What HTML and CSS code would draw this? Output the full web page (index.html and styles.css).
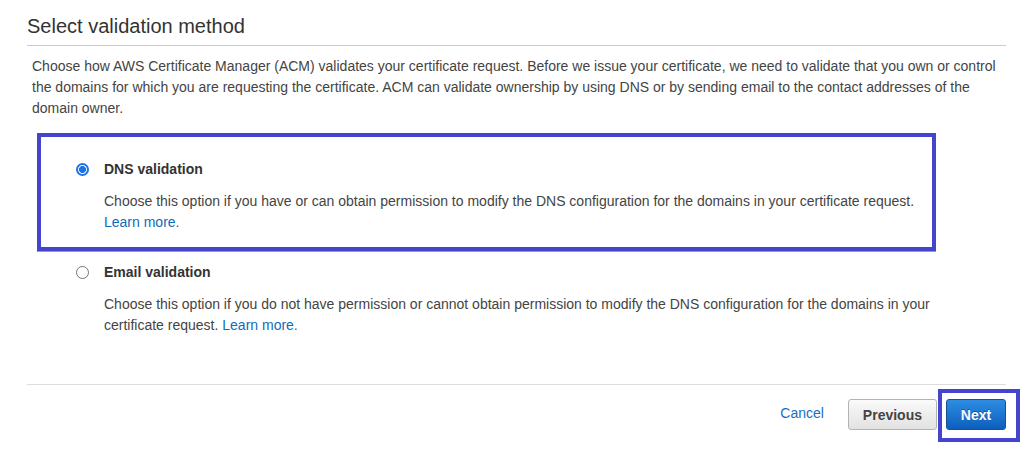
FILE: index.html
```html
<!DOCTYPE html>
<html lang="en">
<head>
<meta charset="utf-8">
<title>Select validation method</title>
<link rel="stylesheet" href="styles.css">
</head>
<body>
<div class="page">
  <h1 class="title">Select validation method</h1>
  <p class="intro">Choose how AWS Certificate Manager (ACM) validates your certificate request. Before we issue your certificate, we need to validate that you own or control the domains for which you are requesting the certificate. ACM can validate ownership by using DNS or by sending email to the contact addresses of the domain owner.</p>

  <div class="option option-selected">
    <span class="radio radio-checked"></span>
    <span class="option-label">DNS validation</span>
    <p class="option-desc">Choose this option if you have or can obtain permission to modify the DNS configuration for the domains in your certificate request. <a class="link" href="#">Learn more.</a></p>
  </div>

  <div class="option option-plain">
    <span class="radio"></span>
    <span class="option-label">Email validation</span>
    <p class="option-desc">Choose this option if you do not have permission or cannot obtain permission to modify the DNS configuration for the domains in your certificate request. <a class="link" href="#">Learn more.</a></p>
  </div>

  <div class="footer">
    <a class="link cancel" href="#">Cancel</a>
    <button class="btn btn-secondary">Previous</button>
    <span class="next-wrap"><button class="btn btn-primary">Next</button></span>
  </div>
</div>
</body>
</html>
```
FILE: styles.css
```css
html, body {
  margin: 0;
  padding: 0;
  background: #ffffff;
}

body {
  font-family: "Liberation Sans", Arial, sans-serif;
  font-size: 14px;
  color: #444444;
}

.page {
  width: 979px;
  padding-left: 27px;
}

.title {
  margin: 0;
  padding: 14px 0 7px 0;
  font-size: 20px;
  line-height: 24px;
  font-weight: normal;
  color: #333333;
  border-bottom: 1px solid #cccccc;
}

.intro {
  margin: 10px 0 0 0;
  padding-left: 5px;
  font-size: 14px;
  line-height: 21px;
  color: #444444;
}

.option {
  display: grid;
  grid-template-columns: 13px 836px;
  column-gap: 15px;
  margin-left: 10px;
  margin-right: 70px;
  border: 4px solid transparent;
  padding-left: 35px;
}

.option-selected {
  margin-top: 14px;
  padding-top: 22px;
  padding-bottom: 14px;
  border-color: #4444cc;
  box-shadow: 0 1px 0 #9a9a9a;
}

.option-plain {
  margin-top: 0;
  padding-top: 7px;
  padding-bottom: 14px;
}

.radio {
  grid-row: 1;
  grid-column: 1;
  align-self: center;
  width: 13px;
  height: 13px;
  box-sizing: border-box;
  border: 1px solid #767676;
  border-radius: 50%;
  background: #ffffff;
}

.radio-checked {
  border: 2px solid #1a73e8;
  background: radial-gradient(circle, #1a73e8 0 3.2px, #ffffff 3.8px);
}

.option-label {
  grid-row: 1;
  grid-column: 2;
  font-weight: bold;
  line-height: 21px;
  color: #333333;
}

.option-desc {
  grid-row: 2;
  grid-column: 2;
  margin: 11px 0 0 0;
  line-height: 21px;
  color: #444444;
}

.link {
  color: #0f6cbd;
  text-decoration: none;
}

.footer {
  display: flex;
  justify-content: flex-end;
  align-items: flex-start;
  margin-top: 30px;
  border-top: 1px solid #dddddd;
  padding-top: 14px;
  padding-bottom: 22px;
}

.cancel {
  line-height: 29px;
  margin-right: 24px;
  color: #1a6ec4;
}

.btn {
  height: 31px;
  box-sizing: border-box;
  border-radius: 3px;
  font-family: "Liberation Sans", Arial, sans-serif;
  font-size: 14px;
  font-weight: bold;
  cursor: pointer;
}

.btn-secondary {
  padding: 0 14px;
  margin-right: 9px;
  color: #444444;
  border: 1px solid #b3b3b3;
  background: linear-gradient(#fafafa, #e2e2e2);
}

.btn-primary {
  display: block;
  width: 60px;
  padding: 0;
  color: #ffffff;
  border: 1px solid #19508f;
  background: linear-gradient(#2e8de2, #0c5fbd);
  text-shadow: 0 -1px 0 rgba(0, 0, 0, 0.35);
}

.next-wrap {
  display: block;
  border: 4px solid #4444cc;
  padding: 6px 10px 8px 4px;
  margin: -10px -14px -12px -8px;
}
```
